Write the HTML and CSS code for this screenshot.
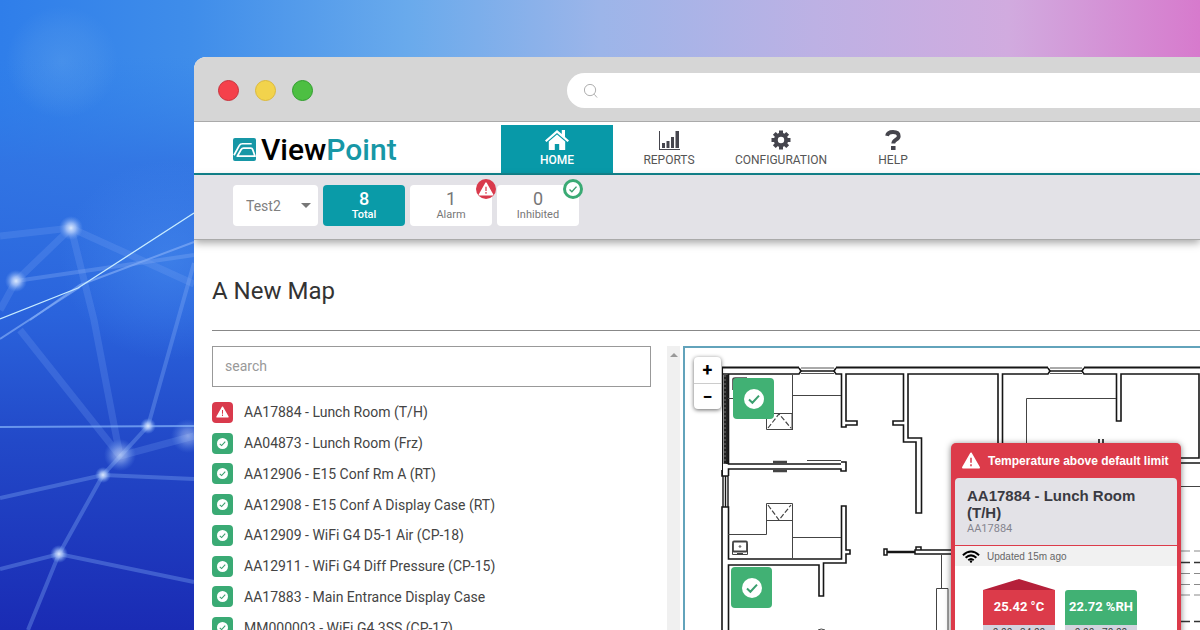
FILE: index.html
```html
<!DOCTYPE html>
<html lang="en">
<head>
<meta charset="utf-8">
<title>ViewPoint</title>
<link rel="stylesheet" href="styles.css">
</head>
<body>
<svg width="0" height="0" class="defs" aria-hidden="true">
  <symbol id="ok" viewBox="0 0 20 20"><circle cx="10" cy="10" r="10" fill="#fff"/><path d="M5 10.600l3.400 3.200L15 6.600" fill="none" stroke="#3a9f6e" stroke-width="2"/></symbol>
  <symbol id="warn" viewBox="0 0 20 18"><path d="M10 1.500 18.500 16.500H1.500Z" fill="#fff" stroke="#fff" stroke-width="2" stroke-linejoin="round"/><path d="M10 6v5.500M10 13v2" stroke="#d93a4c" stroke-width="1.600"/></symbol>
</svg>
<div class="scene">
  <svg class="backdrop" viewBox="0 0 1200 630" preserveAspectRatio="xMinYMin slice" aria-hidden="true">
    <defs>
      <linearGradient id="sky" x1="0" x2="1" y1="0" y2="0">
        <stop offset="0" stop-color="#2f7eea"/><stop offset=".16" stop-color="#3f8dea"/><stop offset=".34" stop-color="#69aaec"/><stop offset=".5" stop-color="#9cb5e9"/><stop offset=".68" stop-color="#bdb1e4"/><stop offset=".84" stop-color="#d1abdf"/><stop offset="1" stop-color="#d77acd"/>
      </linearGradient>
      <linearGradient id="deep" x1="0" x2="0" y1="0" y2="1">
        <stop offset=".09" stop-color="#2e7de8" stop-opacity="0"/><stop offset=".26" stop-color="#3172e2" stop-opacity=".8"/><stop offset=".5" stop-color="#2a63dc"/><stop offset=".7" stop-color="#2249c8"/><stop offset="1" stop-color="#1a2bb4"/>
      </linearGradient>
      <radialGradient id="node"><stop offset="0" stop-color="#e3efff" stop-opacity=".95"/><stop offset=".4" stop-color="#b4cdfa" stop-opacity=".75"/><stop offset="1" stop-color="#6fa0f0" stop-opacity="0"/></radialGradient>
      <radialGradient id="haze"><stop offset="0" stop-color="#63a4ec" stop-opacity=".4"/><stop offset=".6" stop-color="#5a9deb" stop-opacity=".25"/><stop offset="1" stop-color="#5a9deb" stop-opacity="0"/></radialGradient>
      <radialGradient id="glow"><stop offset="0" stop-color="#4a90f0" stop-opacity=".5"/><stop offset="1" stop-color="#4a90f0" stop-opacity="0"/></radialGradient>
    </defs>
    <rect width="1200" height="630" fill="url(#sky)"/>
    <rect width="210" height="630" fill="url(#deep)"/>
    <circle cx="62" cy="62" r="56" fill="url(#haze)"/>
    <ellipse cx="170" cy="260" rx="110" ry="100" fill="url(#glow)"/>
    <g fill="none" stroke="#7faaf5">
      <g stroke-opacity=".22" stroke-width="7"><path d="M0 236 71 228 194 284M71 228 16 281 0 310M71 228 94 320 120 456M20 330 120 456 194 436"/></g>
      <g stroke-opacity=".36" stroke-width="4"><path d="M16 281 194 255M194 263 148 426 103 475 59 554 28 630M0 498 103 475 194 479M0 569 59 554 194 582"/></g>
      <path d="M30 320 80 285 194 242" stroke-opacity=".7" stroke-width="2"/>
      <path d="M0 339 80 287" stroke-opacity=".7" stroke-width="2"/>
      <path d="M0 427 194 426" stroke="#86b5fb" stroke-opacity=".7" stroke-width="2"/>
      <path d="M0 319 78 288 194 213" stroke="#c8ecff" stroke-width="1.300"/>
    </g>
    <g fill="url(#node)"><circle cx="71" cy="228" r="12"/><circle cx="16" cy="281" r="11"/><circle cx="148" cy="426" r="8"/><circle cx="103" cy="475" r="8"/><circle cx="59" cy="554" r="9"/><circle cx="120" cy="455" r="16" opacity=".65"/><circle cx="188" cy="436" r="17" opacity=".5"/></g>
  </svg>

  <div class="window">
    <div class="chrome">
      <div class="lights"><span class="light red"></span><span class="light yellow"></span><span class="light green"></span></div>
      <div class="address">
        <svg class="address-icon" viewBox="0 0 16 16" aria-hidden="true"><circle cx="7.500" cy="7.500" r="6" fill="none" stroke="#aaa"/><path d="m12 12 3 3.500" stroke="#aaa"/></svg>
        <input class="address-input" type="text" aria-label="Address">
      </div>
    </div>

    <header class="header">
      <a class="brand" href="#">
        <svg class="brand-mark" viewBox="0 0 24 24" aria-hidden="true"><rect width="24" height="24" rx="2" fill="#1797a6"/><path d="M1 18 6.500 8Q7.500 6 10 6H19.500" fill="none" stroke="#fff" stroke-width="1.800"/><path d="M4.500 19 8.500 12Q9.500 10.500 11 10.500H18.500Q20 10.500 20.500 12L23 19Z" fill="none" stroke="#fff" stroke-width="1.800" stroke-linejoin="round"/></svg>
        <span class="brand-view">View<span class="brand-point">Point</span></span>
      </a>
      <nav class="nav">
        <a class="tab active" href="#"><svg class="tab-icon" viewBox="0 0 24 20" fill="currentColor" aria-hidden="true"><path d="M12 0 0 10.500l1.500 1.500L12 3l10.500 9 1.500-1.500-4-3.600V0h-3.200v4.100Z"/><path d="M12 4.400 3.800 11.500V20h6v-6h4.400v6h6v-8.500Z"/></svg>HOME</a>
        <a class="tab" href="#"><svg class="tab-icon" viewBox="0 0 24 20" fill="currentColor" aria-hidden="true"><path d="M2 1h1v18h20v1H2ZM5 13h3v5H5ZM9.500 11h3v7h-3ZM14 7h3v11h-3ZM18.500 1h3.500v17h-3.500Z"/></svg>REPORTS</a>
        <a class="tab" href="#"><svg class="tab-icon" viewBox="0 0 24 20" aria-hidden="true"><circle cx="12" cy="10" r="5.200" fill="none" stroke="currentColor" stroke-width="4"/><g stroke="currentColor" stroke-width="4"><path d="M12 .5V4M12 16v3.500M2.500 10H6M18 10h3.500M5.300 3.300 8 6M16 14l2.700 2.700M18.700 3.300 16 6M8 14l-2.700 2.700"/></g></svg>CONFIGURATION</a>
        <a class="tab" href="#"><svg class="tab-icon help" viewBox="0 0 20 22" aria-hidden="true"><path d="M3.500 6.500C4 3.300 6.500 2.200 10 2.200c4 0 6.300 1.700 6.300 4.600 0 4-6 3.700-6 8" fill="none" stroke="currentColor" stroke-width="4.200"/><path d="M7.800 17.500h5V22h-5Z" fill="currentColor"/></svg>HELP</a>
      </nav>
    </header>

    <div class="toolbar">
      <div class="picker">
        <select class="picker-select" aria-label="Site"><option>Test2</option></select>
        <span class="picker-arrow"></span>
      </div>
      <button class="stat selected" type="button"><span class="stat-num">8</span><span class="stat-label">Total</span></button>
      <button class="stat" type="button"><span class="stat-num">1</span><span class="stat-label">Alarm</span><span class="badge alarm"><svg class="badge-warn"><use href="#warn"/></svg></span></button>
      <button class="stat" type="button"><span class="stat-num">0</span><span class="stat-label">Inhibited</span><span class="badge good"><svg class="badge-ok"><use href="#ok"/></svg></span></button>
    </div>

    <main class="page">
      <h1 class="title">A New Map</h1>
      <div class="columns">
        <section class="side">
          <input class="search" type="text" placeholder="search" aria-label="Search sensors">
          <ul class="sensors">
            <li class="sensor"><span class="status bad"><svg class="status-icon"><use href="#warn"/></svg></span>AA17884 - Lunch Room (T/H)</li>
            <li class="sensor"><span class="status"><svg class="status-icon"><use href="#ok"/></svg></span>AA04873 - Lunch Room (Frz)</li>
            <li class="sensor"><span class="status"><svg class="status-icon"><use href="#ok"/></svg></span>AA12906 - E15 Conf Rm A (RT)</li>
            <li class="sensor"><span class="status"><svg class="status-icon"><use href="#ok"/></svg></span>AA12908 - E15 Conf A Display Case (RT)</li>
            <li class="sensor"><span class="status"><svg class="status-icon"><use href="#ok"/></svg></span>AA12909 - WiFi G4 D5-1 Air (CP-18)</li>
            <li class="sensor"><span class="status"><svg class="status-icon"><use href="#ok"/></svg></span>AA12911 - WiFi G4 Diff Pressure (CP-15)</li>
            <li class="sensor"><span class="status"><svg class="status-icon"><use href="#ok"/></svg></span>AA17883 - Main Entrance Display Case</li>
            <li class="sensor"><span class="status"><svg class="status-icon"><use href="#ok"/></svg></span>MM000003 - WiFi G4 3SS (CP-17)</li>
          </ul>
        </section>
        <div class="scrollbar"><span class="scroll-up"></span></div>
        <section class="map" aria-label="Floor plan">
          <svg class="plan" width="515" height="282" viewBox="685 348 515 282" fill="none" stroke="#161616" stroke-width="1.600" aria-hidden="true">
            <path d="M722 367.500H799M836 367.500H1048M1084 367.500H1200" stroke-width="2"/>
            <path d="M722 374H799L801 371 799 368M836 368 834 371 836 374H841.500V427H846V425H857V421H846V374H903.500V421H893V425H903.500V442H916V513H921.500V438H908V374H998V450M1002.500 450V374H1048L1050 371 1048 368M1084 368 1082 371 1084 374H1116.500V421H1121V374H1199V458H1180M1180 463H1200"/>
            <path d="M801 368H834M801 373.500H834M1050 368H1082M1050 373.500H1082" stroke="#555" stroke-width="1"/><path d="M801 371H834M1050 371H1082" stroke-width="1.600"/>
            <path d="M722.500 367V476" stroke-width="1"/><path d="M726 375V464" stroke="#222" stroke-width="5"/><path d="M725 375V464" stroke="#777" stroke-width="1" stroke-dasharray="2 2"/>
            <path d="M728.500 374V464H841M728.500 476V469H841V471H846V462H841M722 470V476H728"/>
            <path d="M723 476V507M725.500 476V507M728 476V507" stroke-width="1.400"/>
            <path d="M722 630V507H728.500V559H841.500V506H846V550H850V554H846V563H823.500V596H819V565H728.500V630"/>
            <path d="M773 462H787M773 471H787" stroke="#444" stroke-width="2.500"/>
            <path d="M887 552H915" stroke-width="2.500"/><path d="M884 549H887V555H884ZM955 550H915V554H955M916 550V547H921V550" stroke-width="1.500"/>
            <g stroke="#444" stroke-width="1">
              <path d="M807 460.500H841M792.500 375V430M792 395.500H841M728 398.500H735M766.500 413.500H792V429.500H766.500ZM728 534.500H766.500V503.500H792.500V558M766 520.500H792M792 537.500H841M1026.500 444V398.500H1116M941.500 555V588M936.500 630V588.500H948V630M1181 486.500H1200"/>
              <path d="M768 428 779 414 791 428M768 505 779 520 791 505" stroke-width="1.200" stroke-dasharray="5 2"/>
              <rect x="733" y="541.500" width="14" height="10" rx="1" stroke-width="1.800"/><path d="M732.500 544V554.500H747.500V544M737 553.500H743"/><circle cx="740" cy="546.500" r=".8"/>
              <path d="M733 390V379Q733 378 735 378H747" stroke-width="1.600"/>
              <path d="M818 630Q821 628 825 630"/>
            </g>
            <path d="M1099 439V445M1103 439V445"/>
            <path d="M1181 551H1200M1181 573.500H1200M1181 584.500H1200M1181 595H1200" stroke="#8a8a8a" stroke-width="1.200" stroke-dasharray="9 4"/>
            <path d="M1181 562.500H1200M1181 621.500H1200" stroke="#333" stroke-width="1.500" stroke-dasharray="9 4"/>
          </svg>
          <div class="zoom"><button class="zoom-btn" type="button">+</button><button class="zoom-btn" type="button">−</button></div>
          <button class="pin pin-a" type="button" aria-label="Sensor in range"><svg class="pin-icon"><use href="#ok"/></svg></button>
          <button class="pin pin-b" type="button" aria-label="Sensor in range"><svg class="pin-icon"><use href="#ok"/></svg></button>
          <article class="popup">
            <div class="popup-head"><svg class="popup-warn"><use href="#warn"/></svg>Temperature above default limit</div>
            <div class="popup-info"><h2 class="popup-title">AA17884 - Lunch Room (T/H)</h2><p class="popup-id">AA17884</p></div>
            <div class="popup-updated">
              <svg class="wifi" viewBox="0 0 20 14" fill="none" stroke="#000" stroke-width="2.200" aria-hidden="true"><path d="M1 5.500Q10-2.500 19 5.500M4 8.500Q10 3 16 8.500M7 11.200Q10 8.500 13 11.200"/><circle cx="10" cy="12.600" r="1.300" fill="#000" stroke="none"/></svg>Updated 15m ago</div>
            <div class="readings">
              <div class="reading high"><svg class="roof" viewBox="0 0 72 11" preserveAspectRatio="none" aria-hidden="true"><path d="M0 11 36 0 72 11Z" fill="#b5203a"/></svg><div class="value">25.42 °C</div><div class="range">0.00 - 24.00</div></div>
              <div class="reading"><div class="value">22.72 %RH</div><div class="range">0.00 - 70.00</div></div>
            </div>
          </article>
        </section>
      </div>
    </main>
  </div>
</div>
</body>
</html>
```
FILE: styles.css
```css
* { box-sizing: border-box; }
body { margin: 0; font-family: Roboto, "Liberation Sans", sans-serif; color: #444; }
button, input, select { font-family: inherit; color: inherit; border: 0; padding: 0; margin: 0; }
a { color: inherit; text-decoration: none; }
.defs { position: absolute; }

.scene { position: relative; display: flex; height: 100vh; padding: 57px 0 0 194px; overflow: hidden; }
.backdrop { position: absolute; top: 0; left: 0; width: 100%; height: 100%; }
.window { position: relative; flex: 1; min-width: 0; display: flex; flex-direction: column; background: #fff; border-top-left-radius: 12px; overflow: hidden; }

.chrome { flex: none; display: flex; align-items: center; padding: 16px 0 13px 24px; background: #d6d6d6; border-bottom: 1px solid #aaa; }
.lights { display: flex; gap: 16px; width: 349px; }
.light { width: 21px; height: 21px; border-radius: 50%; border: 1px solid; }
.red { background: #f5414b; border-color: #c8323c; }
.yellow { background: #f2d34c; border-color: #dcb93a; }
.green { background: #4dbf42; border-color: #2f9e2c; }
.address { flex: 1; display: flex; align-items: center; gap: 8px; height: 35px; padding-left: 16px; background: #fff; border-radius: 18px 0 0 18px; }
.address-icon { width: 15px; height: 15px; fill: none; }
.address-input { flex: 1; background: transparent; font-size: 14px; }

.header { flex: none; display: flex; align-items: flex-end; height: 53px; border-bottom: 2px solid #12868f; }
.brand { display: flex; align-items: center; gap: 5px; width: 307px; height: 51px; padding: 4px 0 0 39px; }
.brand-mark { width: 23px; height: 23px; }
.brand-view { font-size: 30px; font-weight: 500; line-height: 32px; color: #000; }
.brand-point { color: #1797a6; }
.nav { display: flex; }
.tab { display: flex; flex-direction: column; align-items: center; gap: 3px; width: 112px; height: 48px; padding-top: 5px; font-size: 12px; line-height: 14px; color: #555; }
.tab.active { background: #0899a8; color: #fff; font-weight: 500; }
.tab-icon { width: 24px; height: 20px; color: #45454d; }
.tab.active .tab-icon { color: #fff; }

.toolbar { position: relative; flex: none; display: flex; gap: 5px; padding: 10px 39px 13px; background: #e3e2e7; border-bottom: 1px solid #aaa; box-shadow: 0 3px 8px rgba(0, 0, 0, .35); }
.picker { position: relative; width: 85px; }
.picker-select { width: 100%; height: 41px; padding-left: 13px; appearance: none; background: #fff; border-radius: 4px; font-size: 14px; color: #808080; }
.picker-arrow { position: absolute; right: 7px; top: 18px; border: 5px solid transparent; border-top-color: #777; border-bottom: 0; pointer-events: none; }
.stat { position: relative; display: flex; flex-direction: column; align-items: center; justify-content: center; width: 82px; height: 41px; background: #fff; border-radius: 4px; color: #777; }
.stat.selected { background: #0a9ba8; color: #fff; font-weight: 500; }
.stat-num { font-size: 18px; line-height: 18px; }
.stat-label { font-size: 11px; line-height: 13px; }
.badge { position: absolute; top: -6px; right: -4px; display: flex; align-items: center; justify-content: center; width: 20px; height: 20px; border-radius: 50%; }
.alarm { background: #d93a4c; }
.good { background: #3aaa74; }
.badge-warn { width: 16px; height: 14px; }
.badge-ok { width: 14px; height: 14px; }

.page { flex: 1; min-height: 0; display: flex; flex-direction: column; padding: 34px 0 0 18px; }
.title { margin: 0; padding-bottom: 22px; border-bottom: 1px solid #888; font-size: 24px; font-weight: 400; line-height: 34px; color: #333; }
.columns { flex: 1; min-height: 0; display: flex; padding-top: 15px; }
.side { width: 439px; }
.search { width: 100%; height: 41px; padding: 0 12px 2px; border: 1px solid #999; font-size: 14px; }
.search::placeholder { color: #999; opacity: 1; }
.sensors { display: grid; grid-auto-rows: 1fr; min-height: 246px; margin: 10px 0 0; padding: 0; list-style: none; }
.sensor { display: flex; align-items: center; gap: 11px; font-size: 14px; line-height: 20px; color: #444; }
.status { display: flex; align-items: center; justify-content: center; width: 21px; height: 21px; border-radius: 4px; background: #3aaa74; }
.status.bad { background: #d93a4c; }
.status-icon { width: 11px; height: 11px; }
.status.bad .status-icon { width: 13px; height: 12px; }

.scrollbar { display: flex; justify-content: center; width: 13px; margin: 0 3px 0 16px; padding-top: 7px; background: #f0f0f0; }
.scroll-up { width: 0; height: 0; border: 4px solid transparent; border-bottom-color: #999; border-top: 0; }
.map { position: relative; flex: 1; min-width: 0; border: 2px solid #62a3bb; border-width: 2px 0 0 2px; overflow: hidden; }
.plan { display: block; }
.zoom { position: absolute; left: 9px; top: 9px; display: flex; flex-direction: column; width: 27px; border-radius: 4px; background: #fff; box-shadow: 0 1px 4px rgba(0, 0, 0, .6); }
.zoom-btn { height: 26px; background: transparent; font-size: 18px; font-weight: 700; line-height: 26px; color: #000; }
.zoom-btn + .zoom-btn { border-top: 1px solid #ccc; }
.pin { position: absolute; display: flex; align-items: center; justify-content: center; width: 41px; height: 41px; border-radius: 4px; background: #41b174; }
.pin-a { left: 48px; top: 30px; }
.pin-b { left: 46px; top: 219px; }
.pin-icon { width: 20px; height: 20px; }

.popup { position: absolute; left: 266px; top: 95px; width: 230px; padding: 0 4px; border-radius: 5px; background: #dc3b4a; box-shadow: 0 1px 6px rgba(0, 0, 0, .5); }
.popup-head { display: flex; align-items: center; gap: 7px; height: 35px; padding-left: 6px; font-family: "Liberation Sans", sans-serif; font-size: 12px; font-weight: 700; white-space: nowrap; color: #fff; }
.popup-warn { width: 20px; height: 17px; }
.popup-info { padding: 9px 12px; background: #e3e2e7; border-radius: 4px 4px 0 0; }
.popup-title { margin: 0; font-family: "Liberation Sans", sans-serif; font-size: 15px; font-weight: 700; line-height: 17px; color: #3a3a42; }
.popup-id { margin: 0; font-size: 11px; line-height: 15px; color: #85858f; }
.popup-updated { display: flex; align-items: center; gap: 7px; height: 20px; margin-top: 1px; padding-left: 7px; background: #f1f1f1; font-family: "Liberation Sans", sans-serif; font-size: 10px; color: #666; }
.wifi { width: 18px; height: 13px; }
.readings { display: flex; gap: 10px; padding: 24px 28px; background: #fff; }
.reading { position: relative; width: 72px; }
.roof { position: absolute; left: 0; bottom: 100%; width: 100%; height: 11px; }
.value { height: 35px; border-radius: 3px 3px 0 0; background: #41b174; font-size: 13px; font-weight: 700; line-height: 34px; text-align: center; white-space: nowrap; color: #fff; }
.high .value { border-radius: 0; background: #dc3b4a; }
.range { background: #d3d3de; font-size: 10px; line-height: 16px; text-align: center; }
```
